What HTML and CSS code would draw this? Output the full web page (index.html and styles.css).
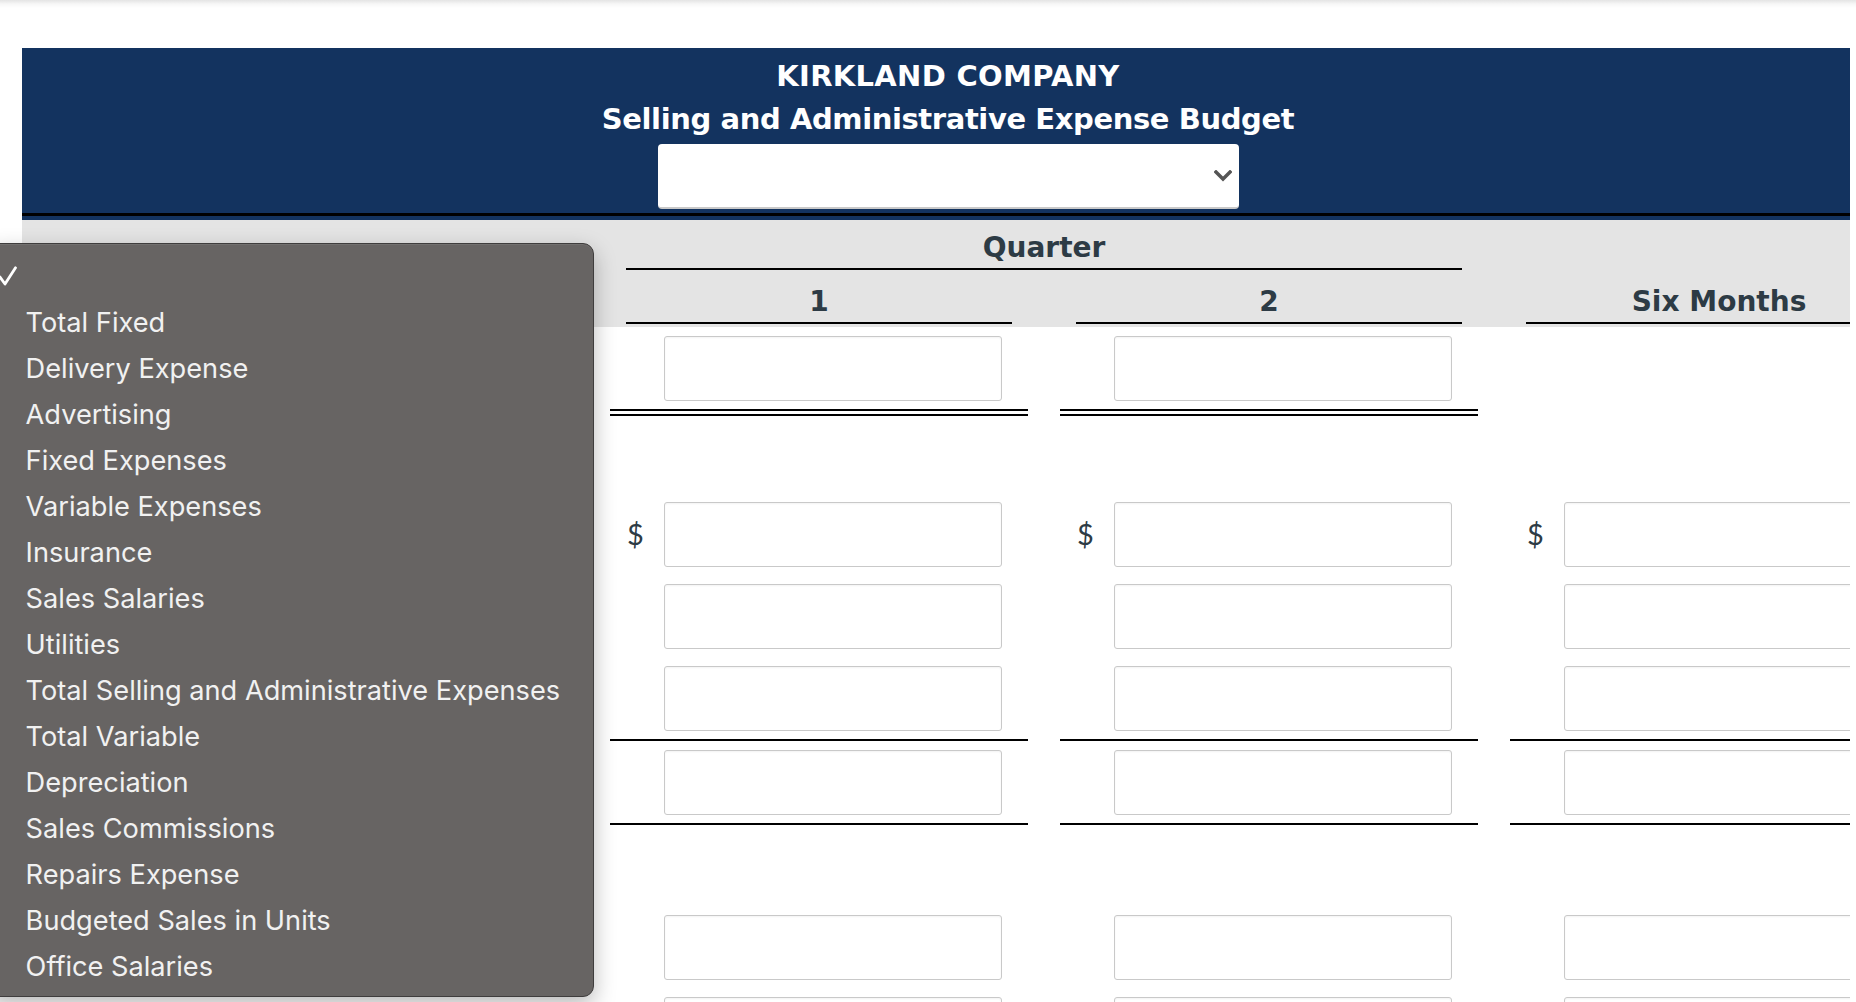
FILE: index.html
```html
<!DOCTYPE html>
<html lang="en">
<head>
<meta charset="utf-8">
<title>Kirkland Company</title>
<link rel="stylesheet" href="styles.css">
</head>
<body>
<div class="page">
  <div class="sheet">
    <header class="hdr">
      <div class="hdr-inner">
        <div class="title">KIRKLAND COMPANY</div>
        <div class="title sub">Selling and Administrative Expense Budget</div>
        <div class="select">
          <svg class="chev" width="18" height="12" viewBox="0 0 18 12"><polyline points="2,2 9,9 16,2" fill="none" stroke="#555" stroke-width="3.4" stroke-linecap="square"/></svg>
        </div>
      </div>
    </header>

    <div class="colhead">
      <div class="hc quarter"><div class="hl">Quarter</div></div>
      <div class="hc q1"><div class="hl">1</div></div>
      <div class="hc q2"><div class="hl">2</div></div>
      <div class="hc q3"><div class="hl">Six Months</div></div>
    </div>

    <div class="grid">
      <div class="lbl"></div>
      <div class="cell dbl"><span class="dollar"></span><div class="inp"></div></div>
      <div class="cell dbl"><span class="dollar"></span><div class="inp"></div></div>
      <div class="cell empty"></div>

      <div class="spacer s1"></div>

      <div class="lbl"></div>
      <div class="cell"><span class="dollar">$</span><div class="inp"></div></div>
      <div class="cell"><span class="dollar">$</span><div class="inp"></div></div>
      <div class="cell"><span class="dollar">$</span><div class="inp"></div></div>

      <div class="lbl"></div>
      <div class="cell"><span class="dollar"></span><div class="inp"></div></div>
      <div class="cell"><span class="dollar"></span><div class="inp"></div></div>
      <div class="cell"><span class="dollar"></span><div class="inp"></div></div>

      <div class="lbl"></div>
      <div class="cell rule"><span class="dollar"></span><div class="inp"></div></div>
      <div class="cell rule"><span class="dollar"></span><div class="inp"></div></div>
      <div class="cell rule"><span class="dollar"></span><div class="inp"></div></div>

      <div class="lbl"></div>
      <div class="cell rule"><span class="dollar"></span><div class="inp"></div></div>
      <div class="cell rule"><span class="dollar"></span><div class="inp"></div></div>
      <div class="cell rule"><span class="dollar"></span><div class="inp"></div></div>

      <div class="spacer s2"></div>

      <div class="lbl"></div>
      <div class="cell"><span class="dollar"></span><div class="inp"></div></div>
      <div class="cell"><span class="dollar"></span><div class="inp"></div></div>
      <div class="cell"><span class="dollar"></span><div class="inp"></div></div>

      <div class="lbl"></div>
      <div class="cell"><span class="dollar"></span><div class="inp"></div></div>
      <div class="cell"><span class="dollar"></span><div class="inp"></div></div>
      <div class="cell"><span class="dollar"></span><div class="inp"></div></div>
    </div>
  </div>
</div>

<div class="menu">
  <div class="opt"><span class="chk"><svg width="19" height="20" viewBox="0 0 19 20"><polyline points="2,11 7,18 17.5,1.8" fill="none" stroke="#fff" stroke-width="2.8" stroke-linejoin="round" stroke-linecap="round"/></svg></span></div>
  <div class="opt"><span class="chk"></span>Total Fixed</div>
  <div class="opt"><span class="chk"></span>Delivery Expense</div>
  <div class="opt"><span class="chk"></span>Advertising</div>
  <div class="opt"><span class="chk"></span>Fixed Expenses</div>
  <div class="opt"><span class="chk"></span>Variable Expenses</div>
  <div class="opt"><span class="chk"></span>Insurance</div>
  <div class="opt"><span class="chk"></span>Sales Salaries</div>
  <div class="opt"><span class="chk"></span>Utilities</div>
  <div class="opt"><span class="chk"></span>Total Selling and Administrative Expenses</div>
  <div class="opt"><span class="chk"></span>Total Variable</div>
  <div class="opt"><span class="chk"></span>Depreciation</div>
  <div class="opt"><span class="chk"></span>Sales Commissions</div>
  <div class="opt"><span class="chk"></span>Repairs Expense</div>
  <div class="opt"><span class="chk"></span>Budgeted Sales in Units</div>
  <div class="opt"><span class="chk"></span>Office Salaries</div>
</div>
</body>
</html>
```

FILE: styles.css
```css
html, body {
  margin: 0;
  padding: 0;
  overflow: hidden;
  height: 100%;
}
body {
  background: linear-gradient(to bottom, #e4e4e4 0, #f7f7f7 4px, #ffffff 8px) no-repeat #ffffff;
  font-family: "Lato", "Helvetica", sans-serif;
  color: #2d3b45;
}
.page {
  padding: 48px 0 0 22px;
}
.sheet {
  width: 1828px;
  overflow: hidden;
}

/* ---------- navy header ---------- */
.hdr {
  width: 1852px;
  background: #13335f;
  padding: 6.5px 0 4px;
}
.hdr-inner {
  border-bottom: 3px solid #000;
  padding-bottom: 4px;
  text-align: center;
}
.title {
  font-family: "DejaVu Sans", "Verdana", sans-serif;
  font-weight: bold;
  font-size: 29px;
  line-height: 43px;
  color: #ffffff;
  letter-spacing: 0.3px;
}
.title.sub {
  letter-spacing: -0.4px;
}
.select {
  position: relative;
  width: 581px;
  height: 65px;
  margin: 3.5px auto 0;
  box-sizing: border-box;
  background: #ffffff;
  border-radius: 4px;
  border-bottom: 2px solid #c9c9c9;
  display: flex;
  align-items: center;
  justify-content: flex-end;
  padding-right: 7px;
}
.chev {
  display: block;
}

/* ---------- column heads ---------- */
.colhead {
  width: 1906px;
  background: #e4e4e4;
  display: grid;
  grid-template-columns: 556px 418px 418px 418px;
  column-gap: 32px;
  padding-bottom: 3px;
  font-family: "DejaVu Sans", "Verdana", sans-serif;
  font-weight: bold;
  font-size: 28px;
  color: #2d3b45;
}
.hc {
  padding: 0 16px;
}
.hl {
  line-height: 40px;
  text-align: center;
  border-bottom: 2.5px solid #000;
}
.quarter {
  grid-column: 2 / span 2;
  grid-row: 1;
  padding-top: 8px;
}
.q1, .q2, .q3 {
  grid-row: 2;
  padding-top: 11.5px;
}
.q1 { grid-column: 2; }
.q2 { grid-column: 3; }
.q3 { grid-column: 4; }

/* ---------- data grid ---------- */
.grid {
  width: 1906px;
  display: grid;
  grid-template-columns: 556px 418px 418px 418px;
  column-gap: 32px;
}
.cell {
  display: flex;
  align-items: center;
  padding: 9px 0 8px;
}
.cell.dbl {
  border-bottom: 7px double #000;
}
.cell.rule {
  border-bottom: 2px solid #000;
}
.dollar {
  width: 54px;
  box-sizing: border-box;
  padding-left: 17px;
  font-family: "Lato", "Liberation Sans", sans-serif;
  font-size: 29px;
  line-height: 30px;
  color: #2d3b45;
}
.inp {
  width: 338px;
  height: 65px;
  box-sizing: border-box;
  background: #ffffff;
  border: 1.5px solid #c9c9c9;
  border-radius: 3px;
  box-shadow: inset 0 1px 2px rgba(0, 0, 0, 0.05);
}
.spacer {
  grid-column: 1 / -1;
}
.s1 { height: 77px; }
.s2 { height: 81px; }

/* ---------- native select popup ---------- */
.menu {
  position: absolute;
  top: 243px;
  left: -12px;
  width: 606px;
  height: 754px;
  box-sizing: border-box;
  padding: 9px 0 8px 10px;
  background: #676463;
  border: 1px solid #3f3d3d;
  border-radius: 11px;
  box-shadow: 0 8px 22px rgba(0, 0, 0, 0.28), inset 0 1px 0 rgba(255, 255, 255, 0.08);
  font-family: "Inter", "Roboto", sans-serif;
  font-size: 27.2px;
  color: #f1f1f1;
}
.opt {
  display: flex;
  align-items: center;
  height: 46.05px;
  white-space: nowrap;
}
.chk {
  width: 26.6px;
  flex: none;
  display: flex;
  align-items: center;
}
.chk svg {
  display: block;
  margin-left: -1px;
}
```
